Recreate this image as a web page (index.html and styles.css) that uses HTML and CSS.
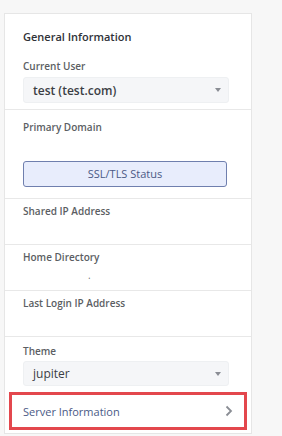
FILE: index.html
```html
<!DOCTYPE html>
<html lang="en">
<head>
  <meta charset="UTF-8">
  <meta name="viewport" content="width=device-width, initial-scale=1.0">
  <title>General Information</title>
  <link rel="stylesheet" href="styles.css">
</head>
<body>
  <div class="panel">
    <div class="intro">
      <h2>General Information</h2>
      <div class="label">Current User</div>
      <div class="select select-user">
        <span>test (test.com)</span>
        <span class="caret"></span>
      </div>
    </div>

    <div class="field field-domain">
      <div class="label">Primary Domain</div>
      <div class="value"></div>
      <a href="#" class="ssl-btn">SSL/TLS Status</a>
    </div>

    <div class="field">
      <div class="label">Shared IP Address</div>
      <div class="value"></div>
    </div>

    <div class="field">
      <div class="label">Home Directory</div>
      <div class="value value-home">.</div>
    </div>

    <div class="field">
      <div class="label">Last Login IP Address</div>
      <div class="value"></div>
    </div>

    <div class="field field-theme">
      <div class="label">Theme</div>
      <div class="select select-theme">
        <span>jupiter</span>
        <span class="caret"></span>
      </div>
    </div>

    <a href="#" class="server-row">
      <span>Server Information</span>
      <svg width="8" height="12" viewBox="0 0 8 12">
        <polyline points="1.5,1.5 6,6 1.5,10.5" fill="none" stroke="#8a8d94" stroke-width="1.8"/>
      </svg>
    </a>
  </div>
</body>
</html>
```

FILE: styles.css
```css
body {
  margin: 0;
  background-color: #f7f7f7;
  font-family: "Open Sans", "Noto Sans", sans-serif;
  color: #333;
}
.panel {
  margin: 13px 0 0 4px;
  width: 248px;
  box-sizing: border-box;
  background: #fff;
  border: 1px solid #e6e6e6;
}
.intro {
  padding: 15px 22px 6px 18px;
}
h2 {
  margin: 0 0 14px;
  font-size: 11px;
  line-height: 16px;
  font-weight: 600;
  color: #2f3238;
}
.label {
  font-size: 10px;
  line-height: 14px;
  font-weight: 600;
  color: #5b5e63;
}
.intro .label {
  margin-bottom: 4px;
}
.select {
  height: 26px;
  box-sizing: border-box;
  display: flex;
  align-items: center;
  justify-content: space-between;
  padding: 0 7px 0 9px;
  background: #f5f6f8;
  border: 1px solid #eef0f2;
  border-radius: 3px;
  font-size: 12px;
  color: #3b3e44;
}
.select-user {
  font-weight: 600;
}
.caret {
  width: 0;
  height: 0;
  border-left: 3px solid transparent;
  border-right: 3px solid transparent;
  border-top: 4px solid #8a8d94;
}
.field {
  border-top: 1px solid #e8e8e8;
  padding: 5px 22px 12px 18px;
}
.value {
  height: 14px;
  font-size: 10px;
  line-height: 14px;
  color: #777;
}
.value-home {
  padding-left: 65px;
  line-height: 22px;
}
.field-domain {
  padding-top: 10px;
  padding-bottom: 11px;
}
.field-domain .value {
  height: 27px;
}
.ssl-btn {
  display: block;
  height: 26px;
  margin-right: 2px;
  box-sizing: border-box;
  background: #e8edfc;
  border: 1px solid #6f7fae;
  border-radius: 3px;
  text-align: center;
  line-height: 24px;
  font-size: 11px;
  color: #4a5a86;
  text-decoration: none;
}
.field-theme {
  padding-top: 7px;
  padding-bottom: 6px;
}
.field-theme .label {
  margin-bottom: 3px;
}
.select-theme {
  height: 25px;
}
.server-row {
  display: flex;
  align-items: center;
  justify-content: space-between;
  height: 38px;
  box-sizing: border-box;
  margin: 0 4px 3px;
  padding: 0 11px 0 11px;
  border: 3px solid #e3474d;
  font-size: 11px;
  color: #4a5a86;
  text-decoration: none;
}
```
